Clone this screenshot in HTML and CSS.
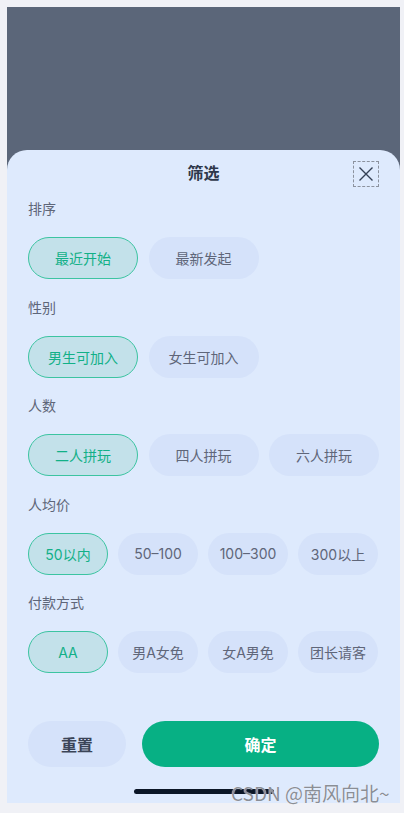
FILE: index.html
```html
<!DOCTYPE html>
<html lang="zh">
<head>
<meta charset="utf-8">
<link rel="stylesheet" href="styles.css">
</head>
<body>
<div class="phone">
  <div class="mask"></div>
  <div class="sheet">
    <div class="header">
      <div class="title">筛选</div>
      <div class="close">
        <svg width="16" height="16" viewBox="0 0 16 16"><path d="M1.5 1.5 L14.5 14.5 M14.5 1.5 L1.5 14.5" stroke="#344055" stroke-width="1.4" fill="none"/></svg>
      </div>
    </div>
    <div class="section">
      <div class="label">排序</div>
      <div class="chips">
        <div class="chip w110 on">最近开始</div>
        <div class="chip w110">最新发起</div>
      </div>
    </div>
    <div class="section">
      <div class="label">性别</div>
      <div class="chips">
        <div class="chip w110 on">男生可加入</div>
        <div class="chip w110">女生可加入</div>
      </div>
    </div>
    <div class="section">
      <div class="label">人数</div>
      <div class="chips">
        <div class="chip w110 on">二人拼玩</div>
        <div class="chip w110">四人拼玩</div>
        <div class="chip w110">六人拼玩</div>
      </div>
    </div>
    <div class="section">
      <div class="label">人均价</div>
      <div class="chips four">
        <div class="chip w80 on">50以内</div>
        <div class="chip w80">50–100</div>
        <div class="chip w80">100–300</div>
        <div class="chip w80">300以上</div>
      </div>
    </div>
    <div class="section">
      <div class="label">付款方式</div>
      <div class="chips four">
        <div class="chip w80 on">AA</div>
        <div class="chip w80">男A女免</div>
        <div class="chip w80">女A男免</div>
        <div class="chip w80">团长请客</div>
      </div>
    </div>
    <div class="actions">
      <div class="btn reset">重置</div>
      <div class="btn ok">确定</div>
    </div>
    <div class="home"></div>
  </div>
</div>
<div class="watermark">CSDN @南风向北~</div>
</body>
</html>
```
FILE: styles.css
```css
html, body {
  margin: 0;
  padding: 0;
  background: #f0f1f6;
  font-family: "Inter", "Noto Sans CJK SC", sans-serif;
}
body {
  width: 404px;
  height: 813px;
  position: relative;
  overflow: hidden;
}
.phone {
  position: absolute;
  left: 7px;
  top: 7px;
  width: 393px;
  height: 796px;
  background: #5b6679;
  display: flex;
  flex-direction: column;
  overflow: hidden;
}
.mask {
  height: 143px;
  flex: none;
}
.sheet {
  flex: 1;
  background: #deeafd;
  border-radius: 20px 20px 0 0;
  padding: 0 21px;
  display: flex;
  flex-direction: column;
}
.header {
  height: 49px;
  position: relative;
  display: flex;
  align-items: center;
  justify-content: center;
}
.title {
  font-size: 16px;
  font-weight: 700;
  color: #2f384a;
  line-height: 20px;
  margin-top: -3px;
}
.close {
  position: absolute;
  right: 0;
  top: 11px;
  width: 24px;
  height: 24px;
  border: 1px dashed #8c929e;
  display: flex;
  align-items: center;
  justify-content: center;
}
.section {
  margin-bottom: 18.5px;
}
.label {
  font-size: 14px;
  line-height: 20px;
  color: #5e6679;
  margin-bottom: 18px;
}
.chips {
  display: flex;
  gap: 10.5px;
}
.chips.four {
  gap: 10px;
}
.chip {
  height: 42px;
  border-radius: 21px;
  background: #d5e2fa;
  color: #5f6679;
  font-size: 14px;
  display: flex;
  align-items: center;
  justify-content: center;
  box-sizing: border-box;
  white-space: nowrap;
}
.w110 { width: 110px; }
.w80 { width: 80px; }
.chip.on {
  background: #c3e1ea;
  border: 1px solid #3cc4a1;
  color: #12b087;
}
.actions {
  margin-top: 29.5px;
  display: flex;
  gap: 16px;
}
.btn {
  height: 46px;
  border-radius: 23px;
  display: flex;
  align-items: center;
  justify-content: center;
  font-size: 16px;
  font-weight: 700;
}
.reset {
  width: 98px;
  background: #d5e2fa;
  color: #3b4457;
}
.ok {
  flex: 1;
  background: #07b084;
  color: #ffffff;
}
.home {
  margin: 22px auto 0;
  width: 140px;
  height: 5px;
  border-radius: 3px;
  background: #0b1627;
}
.watermark {
  position: absolute;
  left: 231px;
  top: 781px;
  font-size: 19px;
  line-height: 24px;
  color: #8a8e96;
  font-family: "Noto Sans CJK SC", sans-serif;
  text-shadow: 0 0 1px #ffffff;
  white-space: nowrap;
}
```
